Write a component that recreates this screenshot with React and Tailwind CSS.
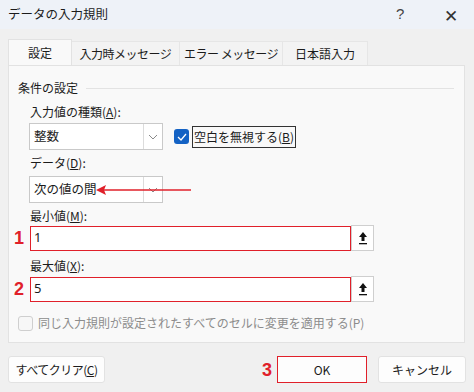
import React from "react";

const FONT = { fontFamily: '"Noto Sans CJK JP", "Noto Sans", "Liberation Sans", sans-serif' };

function Chevron() {
  return (
    <svg width="10" height="6" viewBox="0 0 10 6" fill="none">
      <path d="M1 1l4 4 4-4" stroke="#8a8a8a" strokeWidth="1" />
    </svg>
  );
}

function Select({ value, children }) {
  return (
    <div className="relative flex h-[27px] w-[134px] items-center border border-[#c9c9c9] bg-white">
      <span className="flex-1 pl-[4px] text-[12.5px] leading-none">{value}</span>
      <div className="flex h-full w-[19px] items-center justify-center border-l border-[#dcdcdc]">
        <Chevron />
      </div>
      {children}
    </div>
  );
}

function RefButton() {
  return (
    <div className="flex h-[26px] w-[23px] items-center justify-center border border-[#cfcfcf] bg-white">
      <svg width="10" height="14" viewBox="0 0 10 14">
        <path d="M5 1L1 6h2.5v4h3V6H9z" fill="#111" />
        <rect x="1" y="12" width="8" height="1.3" fill="#111" />
      </svg>
    </div>
  );
}

function NumberedInput({ n, value }) {
  return (
    <div className="flex items-center">
      <span className="w-[21px] pl-[5px] text-[18px] font-bold leading-none text-[#e0202a]" style={{ fontFamily: '"Liberation Sans", sans-serif' }}>{n}</span>
      <div className="flex h-[25px] w-[321px] items-center border-[1.5px] border-[#e0202a] bg-white pl-[3px] text-[13px]" style={{ fontFamily: '"Noto Sans", sans-serif' }}>
        {value}
      </div>
      <RefButton />
    </div>
  );
}

export default function App() {
  return (
    <div className="h-[392px] w-[474px] overflow-hidden bg-[#f0f0f0] text-[12px] text-[#1b1b1b]" style={FONT}>
      {/* title bar */}
      <div className="flex h-[29px] items-center bg-[#eef2f8] pl-[8px] text-[12.5px]">
        <span className="flex-1">データの入力規則</span>
        <span className="w-[12px] text-[15px] text-[#444]" style={{ fontFamily: '"Liberation Sans", sans-serif' }}>?</span>
        <span className="ml-[36px] mr-[16px] text-[17px] font-light leading-none text-[#333]">✕</span>
      </div>

      <div className="pl-[8px] pt-[11px]">
        {/* tabs */}
        <div className="flex h-[25px] items-end whitespace-nowrap">
          <div className="relative z-10 flex h-[26px] w-[64px] items-center justify-center border border-b-0 border-[#e2e2e2] bg-[#f9f9f9]">設定</div>
          <div className="flex h-[24px] w-[108px] items-center justify-center border-r border-t border-[#e6e6e6] bg-[#f3f3f3] tracking-[-0.5px]">入力時メッセージ</div>
          <div className="flex h-[24px] w-[103px] items-center justify-center border-r border-t border-[#e6e6e6] bg-[#f3f3f3] tracking-[-0.5px]">エラー メッセージ</div>
          <div className="flex h-[24px] w-[85px] items-center justify-center border-r border-t border-[#e6e6e6] bg-[#f3f3f3]">日本語入力</div>
        </div>

        {/* panel */}
        <div className="h-[278px] w-[457px] border border-[#e2e2e2] bg-[#f9f9f9]">
          <div className="mt-[14px] flex items-center pl-[9px]">
            <span className="leading-[16px]">条件の設定</span>
            <div className="ml-[8px] mr-[10px] h-px flex-1 bg-[#e3e3e3]" />
          </div>

          <div className="pl-[20px]">
            <div className="mt-[8px] pl-[1px] leading-[16px]">入力値の種類(<u>A</u>):</div>
            <div className="mt-[3px] flex items-center">
              <Select value="整数" />
              <div className="ml-[11px] flex h-[15px] w-[15px] items-center justify-center rounded-[3px] bg-[#1462c4]">
                <svg width="10" height="8" viewBox="0 0 10 8" fill="none">
                  <path d="M1 4l3 3 5-6" stroke="white" strokeWidth="1.3" />
                </svg>
              </div>
              <div className="ml-[3px] whitespace-nowrap border border-[#333] px-[1px] leading-[20px]">空白を無視する(<u>B</u>)</div>
            </div>

            <div className="mt-[5px] pl-[1px] leading-[16px]">データ(<u>D</u>):</div>
            <div className="mt-[5px]">
              <Select value="次の値の間">
                <svg className="absolute left-[66px] top-[7px]" width="95" height="12" viewBox="0 0 95 12">
                  <path d="M7 6H95" stroke="#e0202a" strokeWidth="1.6" />
                  <path d="M0 6l10-5-2 5 2 5z" fill="#e0202a" />
                </svg>
              </Select>
            </div>

            <div className="mt-[5px] pl-[1px] leading-[16px]">最小値(<u>M</u>):</div>
          </div>
          <div className="mt-[1px]">
            <NumberedInput n="1" value="1" />
          </div>
          <div className="mt-[7px] pl-[21px] leading-[16px]">最大値(<u>X</u>):</div>
          <div className="mt-[2px]">
            <NumberedInput n="2" value="5" />
          </div>

          <div className="mt-[13px] flex items-center whitespace-nowrap pl-[9px] text-[#8c8c8c]">
            <div className="h-[15px] w-[15px] rounded-[3px] border border-[#cfcfcf] bg-[#f7f7f7]" />
            <span className="ml-[5px] leading-[16px]">同じ入力規則が設定されたすべてのセルに変更を適用する(P)</span>
          </div>
        </div>

        {/* buttons */}
        <div className="mt-[13px] flex items-center whitespace-nowrap">
          <div className="flex h-[27px] w-[97px] items-center justify-center rounded-[3px] border border-[#e2e2e2] bg-[#fdfdfd] tracking-[-0.5px]">すべてクリア(<u>C</u>)</div>
          <span className="ml-[157px] w-[15px] text-[18px] font-bold leading-none text-[#e0202a]" style={{ fontFamily: '"Liberation Sans", sans-serif' }}>3</span>
          <div className="flex h-[27px] w-[90px] items-center justify-center border-[1.5px] border-[#e0202a] bg-[#fdfdfd]">OK</div>
          <div className="ml-[11px] flex h-[27px] w-[88px] items-center justify-center rounded-[3px] border border-[#e2e2e2] bg-[#fdfdfd]">キャンセル</div>
        </div>
      </div>
    </div>
  );
}
